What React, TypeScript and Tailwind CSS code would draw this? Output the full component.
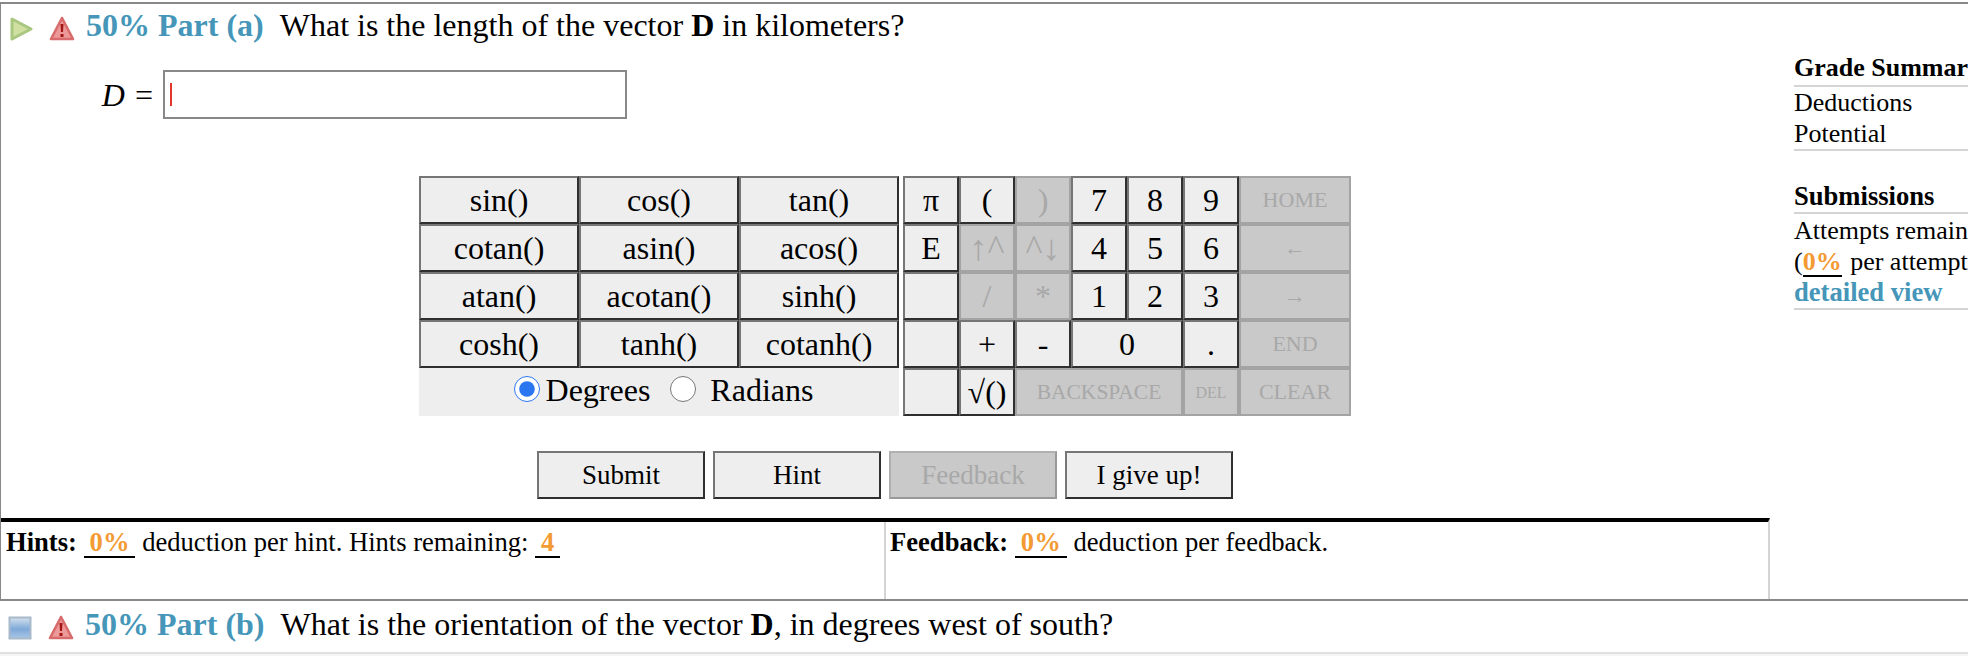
const keyBase =
  'flex items-center justify-center border-2 border-t-[#767676] border-l-[#767676] border-b-[#2f2f2f] border-r-[#2f2f2f] bg-[#eeeeee] text-black text-[32px] leading-none';
const keyOff =
  'flex items-center justify-center border-2 border-[#a3a3a3] bg-[#c9c9c9] text-[#a8a8a8] leading-none';

const funcs = [
  'sin()', 'cos()', 'tan()',
  'cotan()', 'asin()', 'acos()',
  'atan()', 'acotan()', 'sinh()',
  'cosh()', 'tanh()', 'cotanh()',
];

function PlayIcon() {
  return (
    <svg width="26" height="26" viewBox="0 0 26 26" className="blur-[0.7px] -ml-[1px]">
      <path d="M4 3 L23 13 L4 23 Z" fill="#cfe0a0" stroke="#a9c77f" strokeWidth="3" strokeLinejoin="round" />
    </svg>
  );
}

function BoxIcon() {
  return (
    <svg width="24" height="24" viewBox="0 0 24 24" className="blur-[0.7px]">
      <defs>
        <linearGradient id="boxfill" x1="0" y1="0" x2="0" y2="1">
          <stop offset="0" stopColor="#d4e0ee" />
          <stop offset="0.55" stopColor="#7ea9d8" />
          <stop offset="1" stopColor="#a9c6e6" />
        </linearGradient>
      </defs>
      <rect x="1.5" y="1.5" width="21" height="21" fill="url(#boxfill)" stroke="#a8b9c9" strokeWidth="2" />
    </svg>
  );
}

function WarnIcon() {
  return (
    <svg width="26" height="26" viewBox="0 0 26 26" className="blur-[0.7px] mt-[8px]">
      <path d="M13 2 L24 23 L2 23 Z" fill="#ee9999" stroke="#d86c6c" strokeWidth="2.6" strokeLinejoin="round" />
      <path d="M11.5 8 H14.5 L14 16 H12 Z" fill="#a31616" />
      <rect x="11.5" y="18" width="3" height="3" fill="#a31616" />
    </svg>
  );
}

function Deduct({ children }: { children: React.ReactNode }) {
  return (
    <span className="inline-block border-b-2 border-black px-[6px] font-bold text-[#f39a33] leading-[27px]">
      {children}
    </span>
  );
}

function PartHeader({ icon, part, children }: { icon: React.ReactNode; part: string; children: React.ReactNode }) {
  return (
    <div className="flex items-center h-[40px] pl-[8px]">
      <span className="w-[40px] flex mt-[8px]">{icon}</span>
      <WarnIcon />
      <span className="ml-[11px] text-[32px] font-bold text-[#4596b8] whitespace-pre">50% Part ({part})</span>
      <span className="ml-[16px] text-[32px] whitespace-pre">{children}</span>
    </div>
  );
}

function Calculator() {
  return (
    <div className="flex gap-[4px] ml-[418px] mt-[57px]">
      <div className="w-[480px] bg-[#eeeeee]">
        <div className="grid grid-cols-3 auto-rows-[48px]">
          {funcs.map((f) => (
            <div key={f} className={keyBase}>{f}</div>
          ))}
        </div>
        <div className="h-[48px] flex items-center justify-center pl-[9px] pb-[4px] text-[32px] leading-none">
          <input type="radio" defaultChecked className="w-[26px] h-[26px] accent-[#2a75f0] m-0 mb-[2px]" />
          <span className="ml-[6px]">Degrees</span>
          <input type="radio" className="ml-[20px] w-[26px] h-[26px] m-0 mb-[2px]" />
          <span className="ml-[14px]">Radians</span>
        </div>
      </div>
      <div className="grid w-[448px] grid-cols-[56px_56px_56px_56px_56px_56px_112px] auto-rows-[48px]">
        <div className={keyBase}>π</div>
        <div className={keyBase}>(</div>
        <div className={`${keyOff} text-[32px]`}>)</div>
        <div className={keyBase}>7</div>
        <div className={keyBase}>8</div>
        <div className={keyBase}>9</div>
        <div className={`${keyOff} text-[22px]`}>HOME</div>

        <div className={keyBase}>E</div>
        <div className={`${keyOff} text-[36px]`}>↑^</div>
        <div className={`${keyOff} text-[36px]`}>^↓</div>
        <div className={keyBase}>4</div>
        <div className={keyBase}>5</div>
        <div className={keyBase}>6</div>
        <div className={`${keyOff} text-[22px]`}>←</div>

        <div className={keyBase}></div>
        <div className={`${keyOff} text-[32px]`}>/</div>
        <div className={`${keyOff} text-[32px]`}>*</div>
        <div className={keyBase}>1</div>
        <div className={keyBase}>2</div>
        <div className={keyBase}>3</div>
        <div className={`${keyOff} text-[22px]`}>→</div>

        <div className={keyBase}></div>
        <div className={keyBase}>+</div>
        <div className={keyBase}>-</div>
        <div className={`${keyBase} col-span-2`}>0</div>
        <div className={keyBase}>.</div>
        <div className={`${keyOff} text-[22px]`}>END</div>

        <div className={keyBase}></div>
        <div className={keyBase}>√()</div>
        <div className={`${keyOff} col-span-3 text-[21.5px] pt-[2px]`}>BACKSPACE</div>
        <div className={`${keyOff} text-[16px] pt-[2px]`}>DEL</div>
        <div className={`${keyOff} text-[22px]`}>CLEAR</div>
      </div>
    </div>
  );
}

export default function App() {
  return (
    <div className="w-[1968px] h-[656px] overflow-hidden bg-white text-black font-['Liberation_Serif',serif]">
      <div className="h-[2px]" />
      <div className="h-[599px] border-t-2 border-b-2 border-l border-[#888888] flex">
        <div className="w-[1769px] flex flex-col">
          <div className="pt-[1px]">
            <PartHeader icon={<PlayIcon />} part="a">
              What is the length of the vector <b>D</b> in kilometers?
            </PartHeader>
          </div>
          <div className="flex items-center mt-[25px] h-[49px]">
            <span className="w-[152px] text-right text-[32px]"><i>D</i><span className="ml-[2px]"> =</span></span>
            <div className="ml-[10px] w-[464px] h-[49px] border-2 border-[#888888] flex items-center pl-[5px]">
              <span className="w-[2px] h-[23px] bg-[#e5362c]" />
            </div>
          </div>
          <Calculator />
          <div className="flex gap-[8px] ml-[536px] mt-[35px]">
            {['Submit', 'Hint', 'Feedback', 'I give up!'].map((b) => (
              <div
                key={b}
                className={
                  b === 'Feedback'
                    ? 'w-[168px] h-[48px] flex items-center justify-center border-2 border-t-[#b0b0b0] border-l-[#b0b0b0] border-b-[#999999] border-r-[#999999] bg-[#c9c9c9] text-[#a8a8a8] text-[27px]'
                    : 'w-[168px] h-[48px] flex items-center justify-center border-2 border-t-[#767676] border-l-[#767676] border-b-[#2f2f2f] border-r-[#2f2f2f] bg-[#eeeeee] text-[27px]'
                }
              >
                {b}
              </div>
            ))}
          </div>
          <div className="mt-[19px] flex-1 flex border-t-4 border-r-2 border-t-black border-r-[#d4d4d4] text-[26.6px]">
            <div className="w-[885px] border-r-2 border-[#d4d4d4] pl-[5px] pt-[1px] whitespace-pre">
              <b>Hints:</b> <Deduct>0%</Deduct> deduction per hint. Hints remaining: <Deduct>4</Deduct>
            </div>
            <div className="flex-1 pl-[4px] pt-[1px] whitespace-pre">
              <b>Feedback:</b> <Deduct>0%</Deduct> deduction per feedback.
            </div>
          </div>
        </div>
        <div className="flex-1 pl-[24px] pt-[48px] text-[26px] leading-[31px] whitespace-nowrap overflow-hidden">
          <div className="font-bold border-b-2 border-[#d4d4d4] pb-[2px]">Grade Summary</div>
          <div className="border-b-2 border-[#d4d4d4]">
            <div>Deductions</div>
            <div>Potential</div>
          </div>
          <div className="mt-[28px] pt-[2px] font-bold text-[26.6px] border-b-2 border-[#d4d4d4]">Submissions</div>
          <div className="border-b-2 border-[#d4d4d4] pt-[1px]">
            <div>Attempts remaining</div>
            <div>
              (<span className="inline-block border-b-2 border-black font-bold text-[#f39a33] leading-[27px] mr-[2px]">0%</span> per attempt)
            </div>
            <div className="font-bold text-[26.6px] text-[#4596b8]">detailed view</div>
          </div>
        </div>
      </div>
      <div className="h-[51px]">
        <div className="pt-[3px]">
          <PartHeader icon={<BoxIcon />} part="b">
            What is the orientation of the vector <b>D</b>, in degrees west of south?
          </PartHeader>
        </div>
      </div>
      <div className="h-[4px] border-t-2 border-[#e0e0e0] bg-[#f5f5f5]" />
    </div>
  );
}
